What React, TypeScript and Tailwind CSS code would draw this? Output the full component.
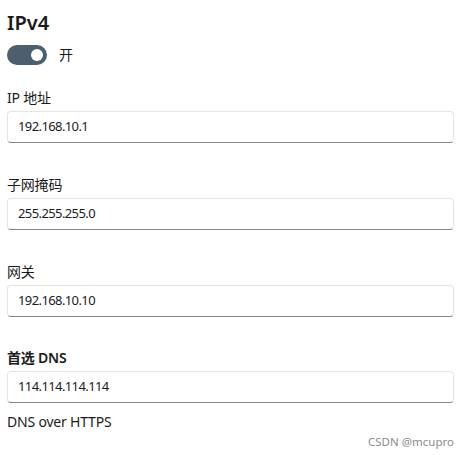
const font = { fontFamily: '"Noto Sans", "Noto Sans CJK SC", sans-serif' }

const Field = ({ label, value, bold }: { label: string; value: string; bold?: boolean }) => (
  <div className="flex flex-col">
    <div className={`h-5 text-[14px] leading-5 tracking-[-0.2px] text-[#1b1b1b] ${bold ? "font-semibold" : ""}`}>{label}</div>
    <div className="mt-[3px] flex h-[32px] items-center rounded-[4px] border border-[#e5e5e5] border-b-[#868686] bg-white px-[10px] text-[13px] tracking-[-0.6px] text-[#1b1b1b]">
      {value}
    </div>
  </div>
)

export default function App() {
  return (
    <div className="h-[455px] w-[469px] overflow-hidden bg-white pl-[7px] pr-[15px]" style={font}>
      <div className="flex h-[39px] items-end pb-[6px] text-[20px] font-semibold leading-none text-[#1b1b1b]">IPv4</div>
      <div className="mt-[5px] flex items-center gap-3">
        <div className="flex h-5 w-10 items-center justify-end rounded-full bg-[#4b5f6e] pr-[4px]">
          <div className="h-[12px] w-[12px] rounded-full bg-white" />
        </div>
        <span className="text-[14px] text-[#1b1b1b]">开</span>
      </div>
      <div className="mt-[23px] flex flex-col gap-[32px]">
        <Field label="IP 地址" value="192.168.10.1" />
        <Field label="子网掩码" value="255.255.255.0" />
        <Field label="网关" value="192.168.10.10" />
      </div>
      <div className="mt-[31px]">
        <Field label="首选 DNS" value="114.114.114.114" bold />
      </div>
      <div className="mt-[9px] text-[14px] leading-5 tracking-[-0.2px] text-[#1b1b1b]">DNS over HTTPS</div>
      <div className="mt-[2px] text-right text-[11.5px] leading-4 text-[#8c8c8c]">CSDN @mcupro</div>
    </div>
  )
}
